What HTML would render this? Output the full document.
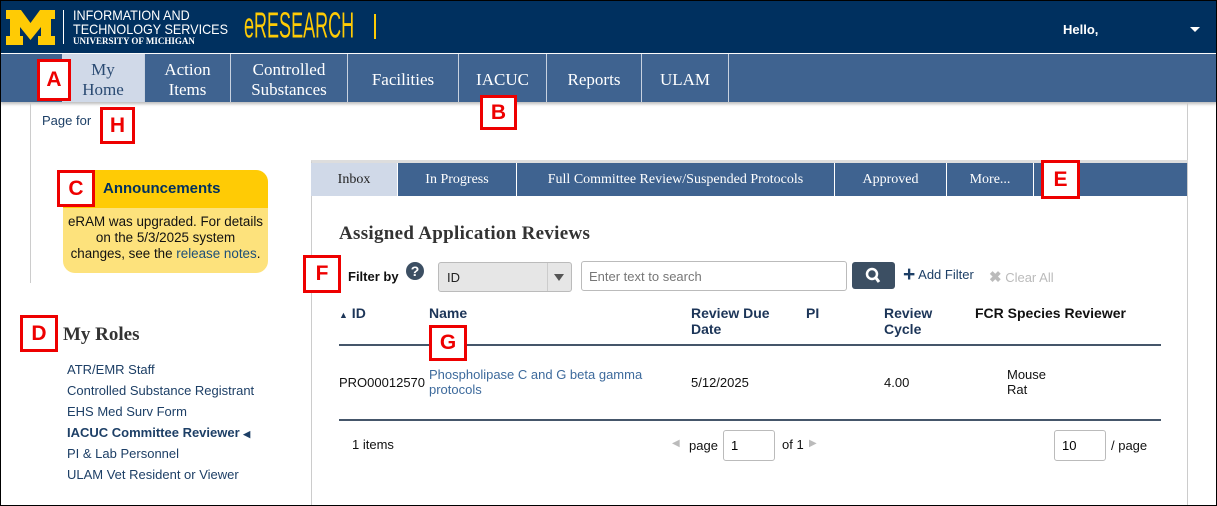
<!DOCTYPE html>
<html><head><meta charset="utf-8"><style>
*{margin:0;padding:0;box-sizing:border-box}
body{width:1217px;height:506px;position:relative;overflow:hidden;background:#fff;font-family:"Liberation Sans",sans-serif;}
.abs{position:absolute}
.frame{position:absolute;left:0;top:0;width:1217px;height:506px;border:1px solid #000;pointer-events:none;z-index:50}
.hdr{left:0;top:0;width:1217px;height:53px;background:#00305f}
.nav{left:0;top:54px;width:1217px;height:48px;background:#3f6390;box-shadow:0 2px 3px #bbb}
.ni{position:absolute;top:0;height:48px;padding-top:3px;display:flex;align-items:center;justify-content:center;text-align:center;color:#fff;font-family:"Liberation Serif",serif;font-size:17px;line-height:20px;border-right:1px solid #c8d2e0}
.tab{position:absolute;top:0;height:33px;padding-top:1px;display:flex;align-items:center;justify-content:center;color:#fff;font-family:"Liberation Serif",serif;font-size:14px;border-right:1px solid #fff}
.rb{position:absolute;border:3px solid #e00;background:#fff;color:#e00;font-weight:bold;font-size:21px;display:flex;align-items:center;justify-content:center;z-index:20}
.role{position:absolute;left:67px;font-size:13px;color:#1d3f66}
.th{position:absolute;font-size:14px;font-weight:bold;color:#1c3558;line-height:16px}
</style></head><body>
<div class="abs hdr">
<svg class="abs" style="left:6px;top:10px" width="49" height="35" viewBox="0 0 49 35"><polygon fill="#ffcb05" points="0,0 15,0 24.5,13 34,0 49,0 49,9 45,9 45,26 49,26 49,35 32,35 32,26 35,26 35,17 24.5,30 14,17 14,26 17,26 17,35 0,35 0,26 4,26 4,9 0,9"/></svg>
<div class="abs" style="left:63px;top:10px;width:1px;height:34px;background:#fff"></div>
<div class="abs" style="left:73px;top:8px;color:#fff;font-size:14px;line-height:14px;transform:scaleX(.9);transform-origin:left">INFORMATION AND<br>TECHNOLOGY SERVICES</div>
<div class="abs" style="left:73px;top:36px;color:#fff;font-size:9px;font-family:'Liberation Serif',serif;font-weight:bold">UNIVERSITY OF MICHIGAN</div>
<div class="abs" style="left:244px;top:6px;color:#ffcb05;font-size:34px;line-height:38px;transform:scale(.53,1.05);transform-origin:left top;white-space:nowrap">eRESEARCH</div>
<div class="abs" style="left:374px;top:14px;width:2px;height:25px;background:#ffcb05"></div>
<div class="abs" style="left:1063px;top:22px;color:#fff;font-size:13px;font-weight:bold">Hello,</div>
<div class="abs" style="left:1190px;top:27px;width:0;height:0;border-left:5px solid transparent;border-right:5px solid transparent;border-top:5px solid #fff"></div>
</div>
<div class="abs nav">
<div class="ni" style="left:62px;width:83px;background:#d0d9e8;color:#2a4a72">My<br>Home</div>
<div class="ni" style="left:145px;width:86px">Action<br>Items</div>
<div class="ni" style="left:231px;width:117px">Controlled<br>Substances</div>
<div class="ni" style="left:348px;width:111px">Facilities</div>
<div class="ni" style="left:459px;width:88px">IACUC</div>
<div class="ni" style="left:547px;width:95px">Reports</div>
<div class="ni" style="left:642px;width:87px">ULAM</div>
</div>
<div class="abs" style="left:30px;top:103px;width:1px;height:180px;background:#ccc"></div>
<div class="abs" style="left:1187px;top:103px;width:1px;height:403px;background:#ccc"></div>
<div class="abs" style="left:42px;top:113px;font-size:13px;color:#1d3f66">Page for</div>
<div class="abs" style="left:63px;top:170px;width:205px;height:103px;background:#fde27c;border-radius:12px;overflow:hidden">
<div style="height:38px;background:#ffcb05;color:#00305f;font-weight:bold;font-size:15px;padding:10px 0 0 40px">Announcements</div>
<div style="text-align:center;font-size:13.4px;line-height:16px;color:#111;padding-top:6px">eRAM was upgraded. For details<br>on the 5/3/2025 system<br>changes, see the <span style="color:#1d4f78">release notes</span>.</div>
</div>
<div class="abs" style="left:63px;top:324px;font-family:'Liberation Serif',serif;font-weight:bold;font-size:19px;color:#333">My Roles</div>
<div class="role" style="top:362px">ATR/EMR Staff</div>
<div class="role" style="top:383px">Controlled Substance Registrant</div>
<div class="role" style="top:404px">EHS Med Surv Form</div>
<div class="role" style="top:425px;font-weight:bold">IACUC Committee Reviewer <span style="font-size:9px">&#9664;</span></div>
<div class="role" style="top:446px">PI &amp; Lab Personnel</div>
<div class="role" style="top:467px">ULAM Vet Resident or Viewer</div>
<div class="abs" style="left:311px;top:160px;width:877px;height:346px;border-left:1px solid #ccc;border-top:3px solid #ddd"></div>
<div class="abs" style="left:311px;top:163px;width:876px;height:33px;background:#3f6390">
<div class="tab" style="left:0;width:87px;background:#d0d9e8;color:#222">Inbox</div>
<div class="tab" style="left:87px;width:119px">In Progress</div>
<div class="tab" style="left:206px;width:318px">Full Committee Review/Suspended Protocols</div>
<div class="tab" style="left:524px;width:112px">Approved</div>
<div class="tab" style="left:636px;width:87px">More...</div>
</div>
<div class="abs" style="left:339px;top:223px;font-family:'Liberation Serif',serif;font-weight:bold;font-size:19px;letter-spacing:0.3px;color:#333">Assigned Application Reviews</div>
<div class="abs" style="left:348px;top:269px;font-size:13px;font-weight:bold;color:#111">Filter by</div>
<div class="abs" style="left:406px;top:262px;width:18px;height:18px;border-radius:50%;background:#3c4f63;color:#fff;font-weight:bold;font-size:14px;text-align:center;line-height:18px">?</div>
<div class="abs" style="left:438px;top:262px;width:134px;height:30px;border:1px solid #bbb;border-radius:3px;background:#e6e6e6">
<span class="abs" style="left:8px;top:7px;font-size:13px;color:#222">ID</span>
<div class="abs" style="left:108px;top:0;width:1px;height:28px;background:#ccc"></div>
<div class="abs" style="left:115px;top:11px;border-left:5px solid transparent;border-right:5px solid transparent;border-top:7px solid #555"></div></div>
<div class="abs" style="left:581px;top:261px;width:266px;height:30px;border:1px solid #bbb;border-radius:3px;font-size:13px;color:#777;padding:7px 0 0 7px">Enter text to search</div>
<div class="abs" style="left:852px;top:262px;width:43px;height:27px;background:#3c4f63;border-radius:3px">
<svg width="43" height="27"><circle cx="20" cy="12" r="5" stroke="#fff" stroke-width="2.5" fill="none"/><line x1="24" y1="16" x2="27" y2="20" stroke="#fff" stroke-width="3"/></svg></div>
<div class="abs" style="left:903px;top:267px;font-size:13px;color:#1d3f66"><b style="font-size:21px;line-height:14px;color:#1d3f66;vertical-align:-2px">+</b> Add Filter</div>
<div class="abs" style="left:989px;top:268px;font-size:13px;color:#bbb"><b style="font-size:15px">&#10006;</b> Clear All</div>
<div class="th" style="left:339px;top:305px"><span style="font-size:9px">&#9650;</span> ID</div>
<div class="th" style="left:429px;top:305px">Name</div>
<div class="th" style="left:691px;top:305px">Review Due<br>Date</div>
<div class="th" style="left:806px;top:305px">PI</div>
<div class="th" style="left:884px;top:305px">Review<br>Cycle</div>
<div class="th" style="left:975px;top:305px;color:#111">FCR Species Reviewer</div>
<div class="abs" style="left:339px;top:344px;width:822px;height:2px;background:#45566a"></div>
<div class="abs" style="left:339px;top:375px;font-size:13px;color:#111">PRO00012570</div>
<div class="abs" style="left:429px;top:367px;font-size:13px;line-height:15px;color:#3d6a9c">Phospholipase C and G beta gamma<br>protocols</div>
<div class="abs" style="left:691px;top:375px;font-size:13px;color:#111">5/12/2025</div>
<div class="abs" style="left:884px;top:375px;font-size:13px;color:#111">4.00</div>
<div class="abs" style="left:1007px;top:367px;font-size:13px;line-height:15px;color:#111">Mouse<br>Rat</div>
<div class="abs" style="left:339px;top:419px;width:822px;height:2px;background:#45566a"></div>
<div class="abs" style="left:352px;top:437px;font-size:13px;color:#111">1 items</div>
<div class="abs" style="left:672px;top:438px;font-size:10px;color:#bbb">&#9664;</div>
<div class="abs" style="left:689px;top:438px;font-size:13px;color:#111">page</div>
<div class="abs" style="left:723px;top:430px;width:52px;height:31px;border:1px solid #bbb;border-radius:3px;font-size:13px;padding:7px 0 0 7px">1</div>
<div class="abs" style="left:782px;top:437px;font-size:13px;color:#111">of 1</div>
<div class="abs" style="left:809px;top:438px;font-size:10px;color:#bbb">&#9654;</div>
<div class="abs" style="left:1054px;top:430px;width:52px;height:31px;border:1px solid #bbb;border-radius:3px;font-size:13px;padding:7px 0 0 7px">10</div>
<div class="abs" style="left:1111px;top:438px;font-size:13px;color:#111">/ page</div>
<div class="rb" style="left:37px;top:59px;width:34px;height:42px">A</div>
<div class="rb" style="left:480px;top:95px;width:37px;height:35px">B</div>
<div class="rb" style="left:100px;top:107px;width:35px;height:37px">H</div>
<div class="rb" style="left:57px;top:170px;width:38px;height:37px">C</div>
<div class="rb" style="left:20px;top:315px;width:38px;height:37px">D</div>
<div class="rb" style="left:1041px;top:160px;width:39px;height:39px">E</div>
<div class="rb" style="left:303px;top:255px;width:38px;height:38px">F</div>
<div class="rb" style="left:429px;top:325px;width:38px;height:36px">G</div>
<div class="frame"></div>
</body></html>
